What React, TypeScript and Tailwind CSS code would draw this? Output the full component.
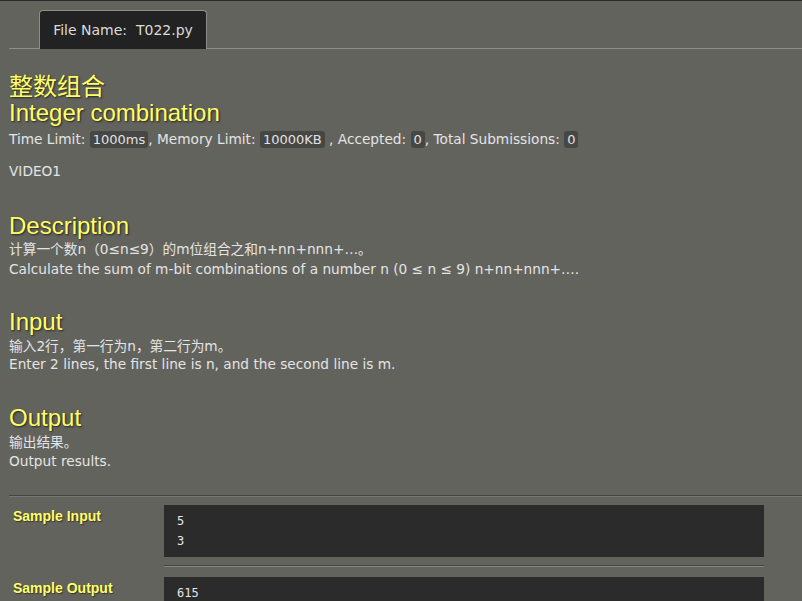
import React from 'react';

const body = "font-['DejaVu_Sans','Noto_Sans_CJK_SC',sans-serif]";
const head = "font-['Liberation_Sans','Noto_Sans_CJK_SC',sans-serif]";

function Badge({ children }: { children: React.ReactNode }) {
  return (
    <span className="rounded-[3px] bg-[#464644] px-[3px] py-[1px] font-['DejaVu_Sans',sans-serif] text-[13px] text-[#e2e2e2]">
      {children}
    </span>
  );
}

function Heading({ children }: { children: React.ReactNode }) {
  return (
    <h2 className={`${head} text-[24px] leading-[26px] text-[#ffff66] [text-shadow:1px_1px_2px_#222]`}>{children}</h2>
  );
}

function Sample({ label, lines }: { label: string; lines: string[] }) {
  return (
    <div className="flex">
      <div className={`${head} w-[155px] pl-[4px] pt-[1px] text-[14px] font-bold text-[#ffff66] [text-shadow:1px_1px_1px_#333]`}>
        {label}
      </div>
      <div className="w-[600px] bg-[#2b2b2b] px-[13px] py-[6px] font-['DejaVu_Sans_Mono',monospace] text-[12px] leading-[20px] text-[#e6e6e6]">
        {lines.map((l, i) => (
          <div key={i}>{l}</div>
        ))}
      </div>
    </div>
  );
}

export default function App() {
  return (
    <div className={`h-[601px] w-[802px] overflow-hidden border-t border-[#2a2a2a] bg-[#63635e] ${body} text-[13.7px] text-[#e4e4e4]`}>
      <div className="ml-[9px] flex h-[48px] items-end border-b border-[#8e8e8a] pl-[30px]">
        <div className="-mb-px flex h-[39px] w-[168px] items-center justify-center rounded-t-[4px] border border-b-0 border-[#8e8e8a] bg-[#222222] text-[14px] text-[#dcdcdc]">
          File Name:&nbsp;&nbsp;T022.py
        </div>
      </div>

      <div className="px-[9px] pt-[25px]">
        <Heading>整数组合</Heading>
        <Heading>Integer combination</Heading>
        <div className="mt-[3px] leading-[20px]">
          Time Limit: <Badge>1000ms</Badge>, Memory Limit: <Badge>10000KB</Badge> , Accepted: <Badge>0</Badge>, Total
          Submissions: <Badge>0</Badge>
        </div>
        <div className="mt-[11px] leading-[20px]">VIDEO1</div>

        <div className="mt-[32px]">
          <Heading>Description</Heading>
          <div className="leading-[20px]">
            <div>计算一个数n（0≤n≤9）的m位组合之和n+nn+nnn+…。</div>
            <div>Calculate the sum of m-bit combinations of a number n (0 ≤ n ≤ 9) n+nn+nnn+….</div>
          </div>
        </div>

        <div className="mt-[30px]">
          <Heading>Input</Heading>
          <div className="mt-[2px] leading-[18px]">
            <div>输入2行，第一行为n，第二行为m。</div>
            <div>Enter 2 lines, the first line is n, and the second line is m.</div>
          </div>
        </div>

        <div className="mt-[32px]">
          <Heading>Output</Heading>
          <div className="mt-[2px] leading-[19px]">
            <div>输出结果。</div>
            <div>Output results.</div>
          </div>
        </div>
      </div>

      <div className="ml-[9px] mt-[24px]">
        <div className="h-px bg-[#444442]" />
        <div className="h-px bg-[#777773]" />
        <div className="pt-[8px]">
          <Sample label="Sample Input" lines={['5', '3']} />
          <div className="ml-[155px] mt-[8px] w-[600px]">
            <div className="h-px bg-[#444442]" />
            <div className="h-px bg-[#858581]" />
          </div>
          <div className="mt-[10px]">
            <Sample label="Sample Output" lines={['615']} />
          </div>
        </div>
      </div>
    </div>
  );
}
